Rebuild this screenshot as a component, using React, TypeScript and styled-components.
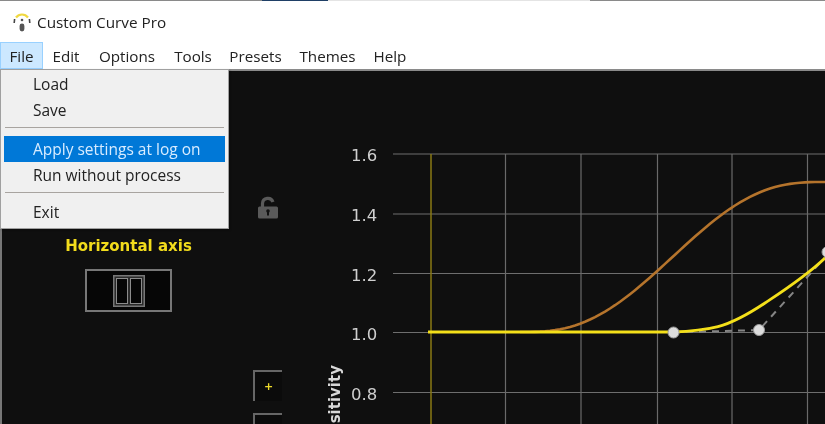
import React from "react";
import styled, { createGlobalStyle } from "styled-components";

const Global = createGlobalStyle`
  html, body { margin: 0; padding: 0; background: #fff; overflow: hidden; }
  * { box-sizing: border-box; }
`;

const Page = styled.div`
  position: relative;
  width: 825px;
  height: 424px;
  overflow: hidden;
  display: flex;
  flex-direction: column;
  background: #fff;
  font-family: "Open Sans", "Noto Sans", sans-serif;
  filter: blur(0.35px);
`;

const TopEdge = styled.div`
  display: flex;
  height: 1px;
  flex: none;
`;

const EdgePiece = styled.div<{ $w: number; $c: string }>`
  flex: ${(p) => (p.$w ? `0 0 ${p.$w}px` : "1")};
  background: ${(p) => p.$c};
`;

const TitleBar = styled.div`
  height: 41px;
  flex: none;
  display: flex;
  align-items: center;
  gap: 6px;
  padding-left: 13px;
  font-size: 15.3px;
  color: #222;
`;

const MenuBar = styled.nav`
  height: 27px;
  flex: none;
  display: flex;
  align-items: stretch;
  font-size: 15.2px;
  color: #222;
`;

const MenuTitle = styled.div<{ $w: number; $open?: boolean }>`
  flex: 0 0 ${(p) => p.$w}px;
  display: flex;
  align-items: center;
  justify-content: center;
  background: ${(p) => (p.$open ? "#cce8ff" : "transparent")};
  border: 1px solid ${(p) => (p.$open ? "#99d1ff" : "transparent")};
`;

const Workspace = styled.main`
  flex: 1;
  display: flex;
  min-height: 0;
  background: #0f0f0f;
  border-top: 2px solid #8a8a8a;
  border-left: 2px solid #777;
`;

const AxisColumn = styled.section`
  flex: 0 0 251px;
  display: flex;
  flex-direction: column;
  align-items: center;
  padding: 166px 0 0 2px;
`;

const AxisLabel = styled.div`
  font-family: "DejaVu Sans", sans-serif;
  font-weight: 700;
  font-size: 15px;
  line-height: 18px;
  color: #f2dc1c;
`;

const AxisToggle = styled.div`
  margin-top: 14px;
  width: 87px;
  height: 43px;
  border: 2px solid #777;
  background: #060606;
  display: flex;
  align-items: center;
  justify-content: center;
`;

const ToolColumn = styled.section`
  flex: 0 0 29px;
  display: flex;
  flex-direction: column;
  align-items: center;
  padding-top: 125px;
`;

const LockIcon = styled.svg`
  width: 24px;
  height: 24px;
  flex: none;
`;

const ZoomButtons = styled.div`
  margin-top: 150px;
  display: flex;
  flex-direction: column;
  gap: 12px;
`;

const ZoomButton = styled.div`
  width: 29px;
  height: 31px;
  display: flex;
  align-items: center;
  justify-content: center;
  border-top: 2px solid #666;
  border-left: 2px solid #666;
  background: #0b0b0b;
  color: #ecd92a;
  font-family: "DejaVu Sans", sans-serif;
  font-weight: 700;
  font-size: 11px;
`;

const Chart = styled.svg`
  flex: 1;
  min-width: 0;
  height: 353px;
  display: block;
`;

const Menu = styled.div`
  position: absolute;
  left: 0;
  top: 69px;
  width: 229px;
  height: 160px;
  padding: 1px 3px;
  background: #f0f0f0;
  border: 1px solid #a0a0a0;
  font-size: 15.5px;
  color: #222;
  box-shadow: 1px 1px 2px rgba(0, 0, 0, 0.25);
`;

const MenuItem = styled.div<{ $active?: boolean }>`
  height: 26px;
  display: flex;
  align-items: center;
  padding: 0 0 1px 29px;
  background: ${(p) => (p.$active ? "#0078d7" : "transparent")};
  color: ${(p) => (p.$active ? "#d8ecff" : "#222")};
`;

const MenuSeparator = styled.div<{ $h: number; $line: number }>`
  height: ${(p) => p.$h}px;
  padding-top: ${(p) => p.$line}px;
  &::after {
    content: "";
    display: block;
    height: 1px;
    margin: 0 1px;
    background: #a8a4a0;
  }
`;

const LogoMark = styled.svg`
  flex: none;
`;

const AppLogo = () => (
  <LogoMark width="18" height="21" viewBox="0 0 18 21">
    <path d="M3 6.5 A7.5 7.5 0 0 1 15 6.5" fill="none" stroke="#f0d840" strokeWidth="2.2" />
    <path d="M1.6 8 L1.2 12 M16.4 8 L16.8 12" stroke="#444" strokeWidth="1.6" />
    <circle cx="9" cy="9" r="1.3" fill="#555" />
    <rect x="6.6" y="12.5" width="4.8" height="8" rx="2.4" fill="#555" />
  </LogoMark>
);

const horizontal = [154, 214, 273.5, 332.5, 392.5];
const vertical = [505.5, 581, 657.5, 732, 807.5];
const labels = [
  ["1.6", 154],
  ["1.4", 214],
  ["1.2", 273.5],
  ["1.0", 332.5],
  ["0.8", 392.5],
] as const;

const orangePath = (() => {
  const pts: string[] = [];
  for (let x = 520; x <= 825; x += 5) {
    const t = (x - 520) / 305;
    const s = t * t * t * (t * (t * 6 - 15) + 10);
    pts.push(`${x} ${(332 - 150 * s).toFixed(2)}`);
  }
  return `M${pts.join(" L")}`;
})();

const CurveChart = () => (
  <Chart viewBox="282 71 543 353" preserveAspectRatio="xMinYMin slice">
    {horizontal.map((y) => (
      <line key={y} x1={393} x2={825} y1={y} y2={y} stroke="#6e6e6e" strokeWidth="1.2" />
    ))}
    {vertical.map((x) => (
      <line key={x} x1={x} x2={x} y1={154} y2={424} stroke="#6a6a6a" strokeWidth="1.2" />
    ))}
    <line x1={431} x2={431} y1={154} y2={424} stroke="#8a7a14" strokeWidth="1.5" />
    {labels.map(([t, y]) => (
      <text
        key={t}
        x={351}
        y={y + 7}
        fontFamily="DejaVu Sans, sans-serif"
        fontSize="16.5"
        fill="#cfcfcf"
      >
        {t}
      </text>
    ))}
    <text
      transform="translate(340 455) rotate(-90)"
      fontFamily="DejaVu Sans, sans-serif"
      fontSize="15"
      fontWeight="700"
      fill="#d8d8d8"
    >
      Sensitivity
    </text>
    <path d={orangePath} fill="none" stroke="#b5742c" strokeWidth="2.6" />
    <path d="M673 332.5 L759 330 L830 252" fill="none" stroke="#858585" strokeWidth="2" strokeDasharray="7 6" />
    <path
      d="M428 332 L673 332 C690 331.5 705 330 718 326.7 C735 322 750 313 765 303 C780 293 805 277 825 258"
      fill="none"
      stroke="#f4e01a"
      strokeWidth="2.8"
    />
    <g fill="#dcdcdc" stroke="#9a9a9a" strokeWidth="1">
      <circle cx={673.5} cy={332.5} r={5.5} />
      <circle cx={759} cy={330} r={5.5} />
      <circle cx={827.5} cy={252} r={5.5} />
    </g>
  </Chart>
);

export default function App() {
  return (
    <Page>
      <Global />
      <TopEdge>
        <EdgePiece $w={262} $c="#8a8a8a" />
        <EdgePiece $w={66} $c="#1f3f66" />
        <EdgePiece $w={262} $c="#e4e4e4" />
        <EdgePiece $w={0} $c="#8a8a8a" />
      </TopEdge>
      <TitleBar>
        <AppLogo />
        <span>Custom Curve Pro</span>
      </TitleBar>
      <MenuBar>
        <MenuTitle $w={43} $open>File</MenuTitle>
        <MenuTitle $w={46}>Edit</MenuTitle>
        <MenuTitle $w={76}>Options</MenuTitle>
        <MenuTitle $w={56}>Tools</MenuTitle>
        <MenuTitle $w={69}>Presets</MenuTitle>
        <MenuTitle $w={75}>Themes</MenuTitle>
        <MenuTitle $w={50}>Help</MenuTitle>
      </MenuBar>
      <Workspace>
        <AxisColumn>
          <AxisLabel>Horizontal axis</AxisLabel>
          <AxisToggle>
            <svg width="32" height="32" viewBox="0 0 32 32">
              <rect x="0.75" y="0.75" width="30.5" height="30.5" fill="#2a2a2a" stroke="#777" strokeWidth="1.5" />
              <rect x="3.5" y="3.5" width="11" height="25" fill="#060606" stroke="#8c8c8c" />
              <rect x="17.5" y="3.5" width="11" height="25" fill="#060606" stroke="#8c8c8c" />
            </svg>
          </AxisToggle>
        </AxisColumn>
        <ToolColumn>
          <LockIcon viewBox="0 0 24 24">
            <path d="M6.5 11 V7.5 A5.4 5.4 0 0 1 17 6" fill="none" stroke="#5a5a5a" strokeWidth="3.2" />
            <rect x="2" y="10.5" width="20" height="12" rx="1.5" fill="#5a5a5a" />
            <circle cx="12" cy="15" r="1.8" fill="#111" />
            <rect x="11" y="15" width="2" height="4.5" fill="#111" />
          </LockIcon>
          <ZoomButtons>
            <ZoomButton>+</ZoomButton>
            <ZoomButton />
          </ZoomButtons>
        </ToolColumn>
        <CurveChart />
      </Workspace>
      <Menu>
        <MenuItem>Load</MenuItem>
        <MenuItem>Save</MenuItem>
        <MenuSeparator $h={13} $line={4} />
        <MenuItem $active>Apply settings at log on</MenuItem>
        <MenuItem>Run without process</MenuItem>
        <MenuSeparator $h={11} $line={4} />
        <MenuItem>Exit</MenuItem>
      </Menu>
    </Page>
  );
}
